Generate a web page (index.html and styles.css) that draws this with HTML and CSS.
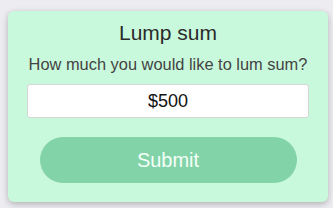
FILE: index.html
```html
<!DOCTYPE html>
<html lang="en">
<head>
  <meta charset="UTF-8">
  <title>Lump sum</title>
  <link rel="stylesheet" href="styles.css">
</head>
<body>
  <div class="card">
    <h2>Lump sum</h2>
    <p class="question">How much you would like to lum sum?</p>
    <input class="amount" type="text" value="$500">
    <button class="submit-btn">Submit</button>
  </div>
</body>
</html>
```

FILE: styles.css
```css
body {
  margin: 0;
  padding: 11px 5px 6px 8px;
  background: #ececf1;
  font-family: 'Liberation Sans', Arial, sans-serif;
}
.card {
  background: #c9f9dc;
  border-radius: 6px;
  box-shadow: 0 2px 6px rgba(0,0,0,0.25);
  height: 191px;
  box-sizing: border-box;
  padding: 10px 19px 0 19px;
  display: flex;
  flex-direction: column;
  align-items: center;
}
h2 {
  margin: 0;
  font-size: 21px;
  font-weight: normal;
  color: #2b2b2b;
  line-height: 24px;
}
.question {
  margin: 9px 0 0 0;
  font-size: 16.4px;
  color: #444;
  line-height: 20px;
}
.amount {
  margin-top: 10px;
  width: 100%;
  height: 34px;
  box-sizing: border-box;
  border: 1px solid #d6d6d6;
  border-radius: 3px;
  background: #fff;
  text-align: center;
  font-family: 'Liberation Sans', Arial, sans-serif;
  font-size: 18px;
  color: #111;
}
.submit-btn {
  margin-top: 19px;
  width: 257px;
  height: 46px;
  border: none;
  border-radius: 23px;
  background: #83d3a8;
  color: #f4fff8;
  font-family: 'Liberation Sans', Arial, sans-serif;
  font-size: 20px;
}
```
